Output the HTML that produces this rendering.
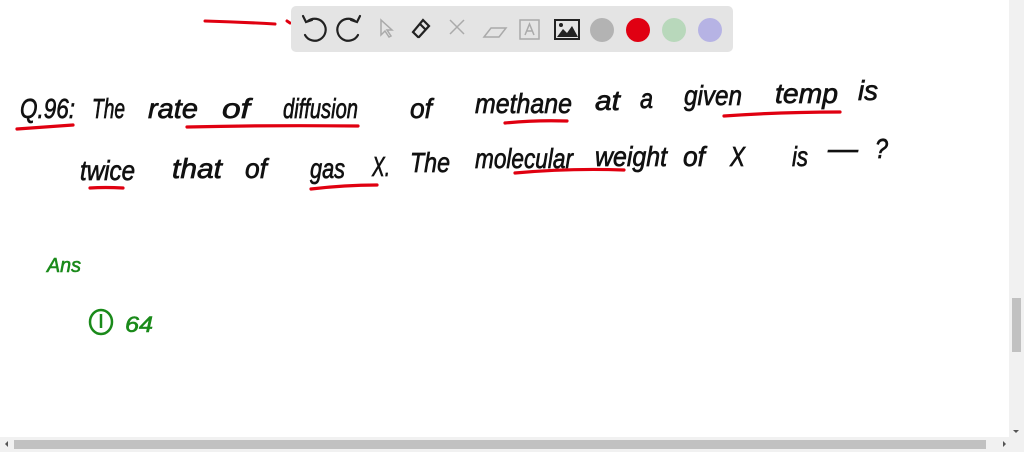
<!DOCTYPE html>
<html><head><meta charset="utf-8"><style>
html,body{margin:0;padding:0;width:1024px;height:452px;overflow:hidden;background:#fff;}
svg{position:absolute;left:0;top:0}
</style></head><body>
<svg width="1024" height="452" xmlns="http://www.w3.org/2000/svg">
<rect width="1024" height="452" fill="#fff"/>
<path d="M205 21 Q240 22 275 24" stroke="#e00010" stroke-width="3" fill="none" stroke-linecap="round"/>
<path d="M287 21 l3 2" stroke="#e00010" stroke-width="3" fill="none" stroke-linecap="round"/>
<rect x="291" y="6" width="442" height="46" rx="5" fill="#e4e4e4"/>
<g fill="none" stroke="#222" stroke-width="2.2" stroke-linecap="round">
<path d="M308 21 A11 11 0 1 1 305 35"/><path d="M303 16 l3 6 l6 -2"/>
<path d="M355 21 A11 11 0 1 0 358 35"/><path d="M360 16 l-3 6 l-6 -2"/>
<path d="M418 37 l-5 -5 l10 -12 l6 6 l-10 11 z M420 24 l5 5"/>
</g>
<g fill="none" stroke="#aaa" stroke-width="1.5">
<path d="M381 20 l0 15 l4 -4 l4 6 l2 -1 l-4 -6 l5 0 z"/>
<path d="M450 20 l14 14 M464 20 l-14 14"/>
<path d="M484 37 l7 -9 l15 0 l-7 9 z"/>
<rect x="520" y="20" width="19" height="19"/><path d="M525 35 l4.5 -11 l4.5 11 M527 31 h5"/>
</g>
<rect x="555" y="20" width="24" height="19" fill="none" stroke="#222" stroke-width="2"/>
<path d="M557 37 l6 -8 l4 4 l5 -7 l6 11 z" fill="#222"/><circle cx="561" cy="25" r="2" fill="#222"/>
<circle cx="602" cy="30" r="12" fill="#b3b3b3"/>
<circle cx="638" cy="30" r="12" fill="#e00012"/>
<circle cx="674" cy="30" r="12" fill="#b8d8bb"/>
<circle cx="710" cy="30" r="12" fill="#b6b3e4"/>
<g font-family="Liberation Sans, sans-serif" font-size="28" fill="#111" stroke="#111" stroke-width="0.7" font-style="italic">
<text x="20" y="118" textLength="55" lengthAdjust="spacingAndGlyphs">Q.96:</text>
<text x="92" y="118" textLength="33" lengthAdjust="spacingAndGlyphs">The</text>
<text x="148" y="118" textLength="50" lengthAdjust="spacingAndGlyphs">rate</text>
<text x="222" y="118" textLength="28" lengthAdjust="spacingAndGlyphs">of</text>
<text x="283" y="118" textLength="75" lengthAdjust="spacingAndGlyphs">diffusion</text>
<text x="410" y="118" textLength="22" lengthAdjust="spacingAndGlyphs">of</text>
<text x="475" y="113" textLength="97" lengthAdjust="spacingAndGlyphs">methane</text>
<text x="595" y="110" textLength="25" lengthAdjust="spacingAndGlyphs">at</text>
<text x="640" y="108" textLength="13" lengthAdjust="spacingAndGlyphs">a</text>
<text x="684" y="105" textLength="58" lengthAdjust="spacingAndGlyphs">given</text>
<text x="775" y="103" textLength="63" lengthAdjust="spacingAndGlyphs">temp</text>
<text x="858" y="100" textLength="20" lengthAdjust="spacingAndGlyphs">is</text>
<text x="80" y="180" textLength="55" lengthAdjust="spacingAndGlyphs">twice</text>
<text x="172" y="178" textLength="50" lengthAdjust="spacingAndGlyphs">that</text>
<text x="245" y="178" textLength="22" lengthAdjust="spacingAndGlyphs">of</text>
<text x="310" y="178" textLength="35" lengthAdjust="spacingAndGlyphs">gas</text>
<text x="372" y="176" textLength="18" lengthAdjust="spacingAndGlyphs">X.</text>
<text x="410" y="172" textLength="40" lengthAdjust="spacingAndGlyphs">The</text>
<text x="475" y="168" textLength="98" lengthAdjust="spacingAndGlyphs">molecular</text>
<text x="595" y="166" textLength="72" lengthAdjust="spacingAndGlyphs">weight</text>
<text x="683" y="166" textLength="22" lengthAdjust="spacingAndGlyphs">of</text>
<text x="730" y="166" textLength="15" lengthAdjust="spacingAndGlyphs">X</text>
<text x="792" y="166" textLength="16" lengthAdjust="spacingAndGlyphs">is</text>
<text x="828" y="158" textLength="30" lengthAdjust="spacingAndGlyphs">—</text>
<text x="875" y="158" textLength="13" lengthAdjust="spacingAndGlyphs">?</text>
</g>
<g fill="none" stroke="#e00010" stroke-width="3.2" stroke-linecap="round">
<path d="M17 129 Q45 127 73 125"/>
<path d="M187 127 Q270 125 358 126"/>
<path d="M505 123 Q535 120 567 121"/>
<path d="M724 116 Q780 112 840 112"/>
<path d="M90 188 Q105 187 123 188"/>
<path d="M311 189 Q345 185 377 185"/>
<path d="M515 173 Q570 168 624 170"/>
</g>
<g font-family="Liberation Sans, sans-serif" fill="#1a8a1a" stroke="#1a8a1a" stroke-width="0.6" font-style="italic">
<text x="47" y="272" font-size="20" textLength="34" lengthAdjust="spacingAndGlyphs">Ans</text>
<text x="125" y="332" font-size="22" textLength="28" lengthAdjust="spacingAndGlyphs">64</text>
</g>
<ellipse cx="101" cy="322" rx="11" ry="12" fill="none" stroke="#1a8a1a" stroke-width="2.5"/>
<path d="M101 314 l0 14" stroke="#1a8a1a" stroke-width="2.5"/>
<rect x="1009" y="0" width="15" height="452" fill="#f1f1f1"/>
<rect x="1012" y="298" width="9" height="54" fill="#c1c1c1"/>
<path d="M1013 430 h6 l-3 3 z" fill="#555"/>
<rect x="0" y="437" width="1024" height="15" fill="#f1f1f1"/>
<rect x="14" y="440" width="972" height="9" fill="#c1c1c1"/>
<path d="M1003 441 v6 l3 -3 z" fill="#555"/>
<path d="M8 441 v6 l-3 -3 z" fill="#555"/>
</svg>
</body></html>
